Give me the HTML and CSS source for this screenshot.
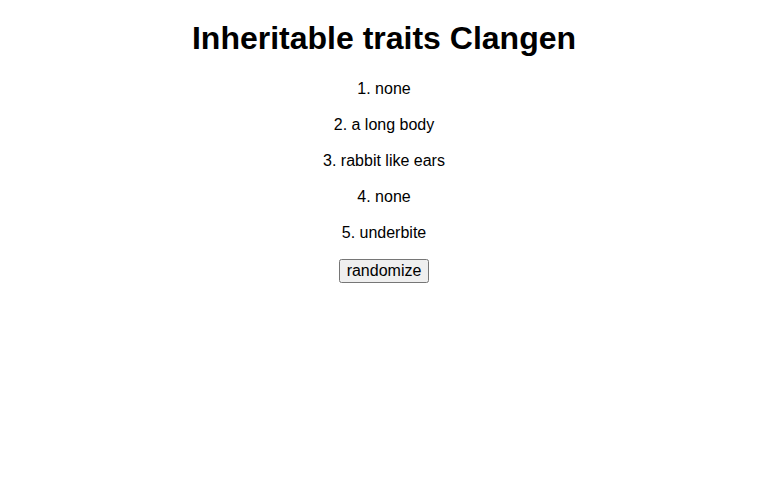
FILE: index.html
```html
<!DOCTYPE html>
<html lang="en">
<head>
    <meta charset="UTF-8">
    <title>Inheritable traits Clangen</title>
    <link rel="stylesheet" href="styles.css">
</head>
<body>
    <h1>Inheritable traits Clangen</h1>

    <div class="traits">
        <p id="trait-1">1. none</p>
        <p id="trait-2">2. a long body</p>
        <p id="trait-3">3. rabbit like ears</p>
        <p id="trait-4">4. none</p>
        <p id="trait-5">5. underbite</p>
    </div>

    <button id="randomize-button">randomize</button>
</body>
</html>
```

FILE: styles.css
```css
/* всё по центру */
body {
    font-family: "Liberation Sans", Arial, sans-serif;
    text-align: center;
    color: #000;
    background: #fff;
}

h1 {
    font-size: 32px;
    margin-top: 12px;
    margin-bottom: 22px;
}

.traits p {
    font-size: 16px;
    line-height: 20px;
}

#randomize-button {
    font-family: "Liberation Sans", Arial, sans-serif;
    font-size: 16px;
}
```
